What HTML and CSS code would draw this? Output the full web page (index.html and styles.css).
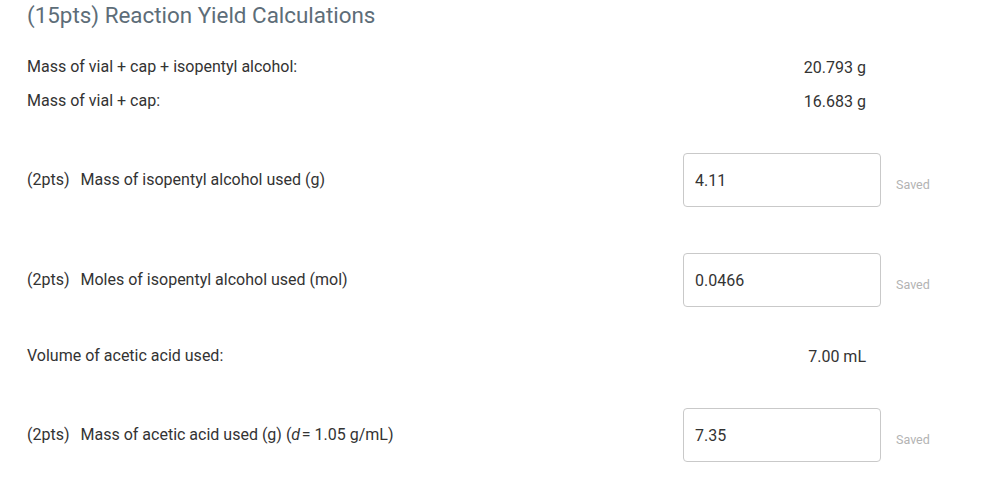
FILE: index.html
```html
<!DOCTYPE html>
<html>
<head>
<meta charset="utf-8">
<link rel="stylesheet" href="styles.css">
</head>
<body>
<div class="page">
  <h1 class="title">(15pts) Reaction Yield Calculations</h1>
  <div class="grid">
    <div class="row r1">
      <div class="label">Mass of vial + cap + isopentyl alcohol:</div>
      <div class="value">20.793 g</div>
      <div class="status"></div>
    </div>
    <div class="row">
      <div class="label">Mass of vial + cap:</div>
      <div class="value">16.683 g</div>
      <div class="status"></div>
    </div>
    <div class="row input-row r3">
      <div class="label"><span class="pts">(2pts)</span>Mass of isopentyl alcohol used (g)</div>
      <div class="field"><input class="box" type="text" value="4.11"></div>
      <div class="status">Saved</div>
    </div>
    <div class="row input-row r4">
      <div class="label"><span class="pts">(2pts)</span>Moles of isopentyl alcohol used (mol)</div>
      <div class="field"><input class="box" type="text" value="0.0466"></div>
      <div class="status">Saved</div>
    </div>
    <div class="row r5">
      <div class="label">Volume of acetic acid used:</div>
      <div class="value">7.00 mL</div>
      <div class="status"></div>
    </div>
    <div class="row input-row r6">
      <div class="label"><span class="pts">(2pts)</span>Mass of acetic acid used (g) (<i>d</i>&#8202;= 1.05 g/mL)</div>
      <div class="field"><input class="box" type="text" value="7.35"></div>
      <div class="status">Saved</div>
    </div>
  </div>
</div>
</body>
</html>
```
FILE: styles.css
```css
html, body {
  margin: 0;
  padding: 0;
  background: #ffffff;
}
body {
  font-family: Roboto, "Liberation Sans", sans-serif;
  color: #333333;
  font-size: 16px;
}
.page {
  padding-left: 27px;
}
.title {
  margin: 0;
  font-size: 22.4px;
  font-weight: 400;
  line-height: 30px;
  color: #5d6d78;
}
.row {
  display: grid;
  grid-template-columns: 656px 198px 100px;
  align-items: center;
  height: 34px;
}
.input-row {
  height: 54px;
}
.r1 { margin-top: 20px; }
.r3 { margin-top: 35px; }
.r4 { margin-top: 46px; }
.r5 { margin-top: 32px; }
.r6 { margin-top: 35px; }
.label {
  line-height: 20px;
}
.pts {
  margin-right: 11px;
}
.value {
  text-align: right;
  padding-right: 15px;
}
.field {
  height: 54px;
}
.box {
  box-sizing: border-box;
  width: 198px;
  height: 54px;
  margin: 0;
  border: 1px solid #c9c9c9;
  border-radius: 4px;
  padding: 0 11px;
  font-family: Roboto, "Liberation Sans", sans-serif;
  font-size: 16px;
  color: #333333;
  background: #ffffff;
  outline: none;
}
.status {
  padding-left: 15px;
  padding-top: 9px;
  font-size: 12.5px;
  color: #b3b3b3;
}
```
